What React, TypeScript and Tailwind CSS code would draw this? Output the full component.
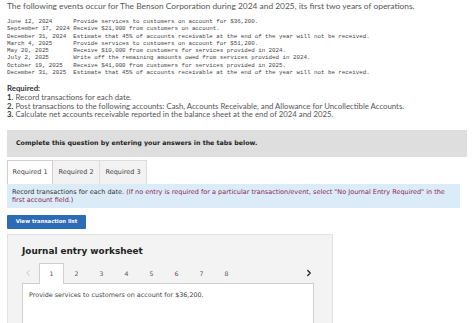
import { ChevronLeft, ChevronRight } from "lucide-react";

const events = [
  ["June 12, 2024", "Provide services to customers on account for $36,200."],
  ["September 17, 2024", "Receive $21,000 from customers on account."],
  ["December 31, 2024", "Estimate that 45% of accounts receivable at the end of the year will not be received."],
  ["March 4, 2025", "Provide services to customers on account for $51,200."],
  ["May 20, 2025", "Receive $10,000 from customers for services provided in 2024."],
  ["July 2, 2025", "Write off the remaining amounts owed from services provided in 2024."],
  ["October 19, 2025", "Receive $41,000 from customers for services provided in 2025."],
  ["December 31, 2025", "Estimate that 45% of accounts receivable at the end of the year will not be received."],
];

const required = [
  "Record transactions for each date.",
  "Post transactions to the following accounts: Cash, Accounts Receivable, and Allowance for Uncollectible Accounts.",
  "Calculate net accounts receivable reported in the balance sheet at the end of 2024 and 2025.",
];

const App = () => {
  return (
    <div className="h-[323px] w-[474px] overflow-hidden bg-white px-[7px]">
      <p className="font-['Lato',sans-serif] text-[8.4px] leading-[12px] text-[#555]">
        The following events occur for The Benson Corporation during 2024 and 2025, its first two years of operations.
      </p>

      {/* event list */}
      <div className="mt-[6px] font-['Liberation_Mono',monospace] text-[5.82px] leading-[7.3px] text-[#444]">
        {events.map(([date, text]) => (
          <div key={date + text} className="whitespace-pre">
            {date.padEnd(19, " ")}
            {text}
          </div>
        ))}
      </div>

      <div className="mt-[8px] font-['Lato',sans-serif] text-[7.8px] leading-[8.7px] text-[#555]">
        <div className="font-bold text-[#333]">Required:</div>
        {required.map((r, i) => (
          <div key={r}>
            <span className="font-bold text-[#333]">{i + 1}.</span> {r}
          </div>
        ))}
      </div>

      <div className="mt-[11px] flex h-[27px] items-center bg-[#dedede] pl-[9px] pb-[2px] font-['DejaVu_Sans',sans-serif] text-[6.3px] font-bold text-[#222]">
        Complete this question by entering your answers in the tabs below.
      </div>

      {/* tabs */}
      <div className="mt-[3px] flex h-[24px] font-['DejaVu_Sans',sans-serif] text-[6.5px] text-[#444]">
        <div className="flex w-[46px] items-center justify-center border border-b-0 border-[#cfcfcf] bg-white">Required 1</div>
        <div className="flex w-[47px] items-center justify-center border border-l-0 border-b-0 border-[#dcdcdc] bg-[#f2f2f2]">Required 2</div>
        <div className="flex w-[47px] items-center justify-center border border-l-0 border-b-0 border-[#dcdcdc] bg-[#f2f2f2]">Required 3</div>
      </div>

      <div className="h-[24px] w-[453px] bg-[#dbecf8] px-[5px] pt-[4px] font-['DejaVu_Sans',sans-serif] text-[6.5px] leading-[8px] text-[#333]">
        <div className="whitespace-nowrap">
          Record transactions for each date.{" "}
          <span className="text-[#8b2557]">
            (If no entry is required for a particular transaction/event, select "No Journal Entry Required" in the
          </span>
        </div>
        <div className="text-[#8b2557]">first account field.)</div>
      </div>

      <button className="mt-[7px] flex h-[14px] w-[79px] items-center justify-center rounded-[1px] bg-[#2c6bb5] font-['DejaVu_Sans',sans-serif] text-[5.3px] font-bold text-white">
        View transaction list
      </button>

      {/* worksheet */}
      <div className="mt-[5px] h-[100px] w-[326px] border border-[#e2e2e2] bg-[#f3f3f3] pl-[14px] pr-[18px] pt-[10px]">
        <div className="font-['DejaVu_Sans',sans-serif] text-[8.9px] font-bold leading-[12px] text-[#222]">
          Journal entry worksheet
        </div>
        <div className="mt-[6px] flex h-[20px] items-center font-['DejaVu_Sans',sans-serif] text-[6.2px] text-[#555]">
          <div className="flex w-[17px] items-center pl-[1px] text-[#aaa]">
            <ChevronLeft size={10} strokeWidth={1.5} />
          </div>
          {[1, 2, 3, 4, 5, 6, 7, 8].map((n) =>
            n === 1 ? (
              <div key={n} className="relative z-10 -mb-px flex h-[21px] w-[25px] items-center justify-center border border-b-0 border-[#d0d0d0] bg-white pb-px">
                {n}
              </div>
            ) : (
              <div key={n} className="flex w-[25px] items-center justify-center">
                {n}
              </div>
            )
          )}
          <div className="ml-auto text-[#222]">
            <ChevronRight size={10} strokeWidth={3} />
          </div>
        </div>
        <div className="h-[60px] border border-[#d0d0d0] bg-white px-[6px] pt-[7px] font-['DejaVu_Sans',sans-serif] text-[6.4px] text-[#444]">
          Provide services to customers on account for $36,200.
        </div>
      </div>
    </div>
  );
};

export default App;
